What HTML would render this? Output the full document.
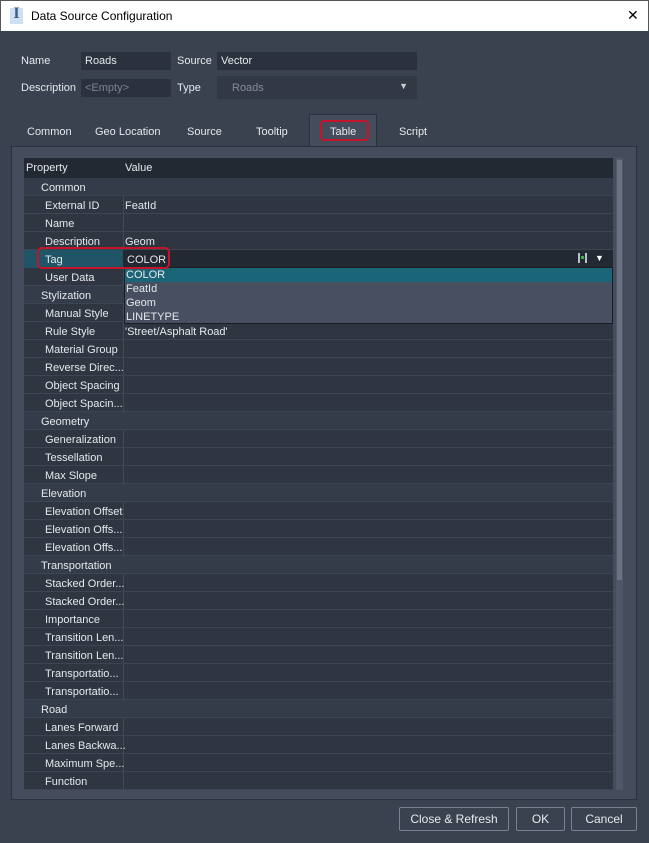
<!DOCTYPE html>
<html><head><meta charset="utf-8"><style>
*{margin:0;padding:0;box-sizing:border-box}
body{width:649px;height:843px;background:#3a4250;font-family:"Liberation Sans",sans-serif;font-size:11px;color:#e6e8ec;position:relative;overflow:hidden}
.a{position:absolute}
#title{left:0;top:0;width:649px;height:31px;background:#fff;border:1px solid #555;border-bottom:none;color:#000;font-size:12px}
.lbl{color:#e6e8ec;font-size:11px}
.fld{background:#2c323d;height:18px;padding:3px 4px;font-size:11px}
.tab{top:126px;font-size:11px;color:#e6e8ec}
#pane{left:11px;top:146px;width:626px;height:654px;background:#454d5d;border:1px solid #2c323d}
#tbl{left:24px;top:158px;width:589px;height:632px;background:#2f3642}
.row{position:absolute;left:0;width:589px;height:18px;border-bottom:1px solid #3e4552;line-height:20px}
.row .p{position:absolute;left:21px}
.row.c{background:#343c49}
.row.c .p{left:17px}
.row .v{position:absolute;left:101px}
.btn{top:807px;height:24px;border:1px solid #7a8190;border-radius:2px;background:#3a4250;text-align:center;line-height:22px;font-size:12px}
</style></head><body>
<div id="title" class="a">
 <div class="a" style="left:9px;top:7px;width:13px;height:16px;background:#cfe0f0"></div>
 <div class="a" style="left:9px;top:4px;font-family:'Liberation Serif',serif;font-weight:bold;font-size:16px;color:#3a5f85;width:13px;text-align:center">I</div>
 <div class="a" style="left:30px;top:8px">Data Source Configuration</div>
 <div class="a" style="left:626px;top:6px;font-size:14px;font-weight:100">✕</div>
</div>
<div class="a lbl" style="left:21px;top:55px">Name</div>
<div class="a fld" style="left:81px;top:52px;width:90px">Roads</div>
<div class="a lbl" style="left:177px;top:55px">Source</div>
<div class="a fld" style="left:217px;top:52px;width:200px">Vector</div>
<div class="a lbl" style="left:21px;top:82px">Description</div>
<div class="a fld" style="left:81px;top:79px;width:90px;color:#7c8390">&lt;Empty&gt;</div>
<div class="a lbl" style="left:177px;top:82px">Type</div>
<div class="a fld" style="left:217px;top:76px;width:200px;height:23px;padding:6px 15px;color:#858c98;background:#323945">Roads<span class="a" style="right:9px;top:5px;font-size:9px;color:#c8ccd2">▼</span></div>

<div class="a" style="left:309px;top:114px;width:68px;height:34px;background:#454d5d;border:1px solid #2c323d;border-bottom:none"></div>
<div class="a tab" style="left:27px">Common</div>
<div class="a tab" style="left:95px">Geo Location</div>
<div class="a tab" style="left:187px">Source</div>
<div class="a tab" style="left:256px">Tooltip</div>
<div class="a" style="left:320px;top:120px;width:49px;height:21px;border:2px solid #c4142a;border-radius:4px"></div>
<div class="a tab" style="left:330px;top:126px">Table</div>
<div class="a tab" style="left:399px">Script</div>

<div id="pane" class="a"></div>
<div class="a" style="left:616px;top:158px;width:7px;height:632px;background:#505867"></div>
<div class="a" style="left:617px;top:160px;width:5px;height:420px;background:#6b7383"></div>
<div id="tbl" class="a">
 <div class="row" style="top:0;height:20px;background:#232932;border-bottom:none;line-height:21px"><span class="a" style="left:2px">Property</span><span class="v">Value</span></div>
 <div class="a" style="left:99px;top:20px;width:1px;height:612px;background:#424957"></div>
</div>
<div id="rows" class="a" style="left:24px;top:178px"></div>
<script>
var r=[["Common",1],["External ID",0,"FeatId"],["Name"],["Description",0,"Geom"],["Tag",2,"COLOR"],["User Data"],["Stylization",1],["Manual Style"],["Rule Style",0,"'Street/Asphalt Road'"],["Material Group"],["Reverse Direc..."],["Object Spacing"],["Object Spacin..."],["Geometry",1],["Generalization"],["Tessellation"],["Max Slope"],["Elevation",1],["Elevation Offset"],["Elevation Offs..."],["Elevation Offs..."],["Transportation",1],["Stacked Order..."],["Stacked Order..."],["Importance"],["Transition Len..."],["Transition Len..."],["Transportatio..."],["Transportatio..."],["Road",1],["Lanes Forward"],["Lanes Backwa..."],["Maximum Spe..."],["Function"]];
var h="";r.forEach(function(x,i){var c=x[1]==1?" c":"";var st="top:"+(i*18)+"px;";
if(x[1]==2){h+='<div class="row" style="'+st+'background:#232932"><div class="a" style="left:0;top:0;width:99px;height:18px;background:#1f5566"></div><span class="p">Tag</span><span class="v" style="left:103px">COLOR</span></div>';}
else h+='<div class="row'+c+'" style="'+st+'"><span class="p">'+x[0]+'</span>'+(x[2]?'<span class="v">'+x[2]+'</span>':'')+'</div>';});
document.getElementById("rows").innerHTML=h;
</script>
<div class="a" style="left:578px;top:253px;width:9px;height:10px;border-left:2px solid #b8c0cc;border-right:2px solid #b8c0cc"><div class="a" style="left:1px;top:3px;width:3px;height:3px;background:#3ab04a"></div></div>
<div class="a" style="left:595px;top:253px;font-size:9px;color:#fff">▼</div>
<div class="a" style="left:124px;top:267px;width:489px;height:57px;background:#474f60;border:1px solid #1a1e24;line-height:14px">
 <div style="background:#1a6678;padding-left:1px">COLOR</div>
 <div style="padding-left:1px">FeatId</div>
 <div style="padding-left:1px">Geom</div>
 <div style="padding-left:1px">LINETYPE</div>
</div>
<div class="a" style="left:37px;top:247px;width:133px;height:22px;border:2px solid #c4142a;border-radius:5px"></div>

<div class="a btn" style="left:399px;width:110px">Close &amp; Refresh</div>
<div class="a btn" style="left:516px;width:49px">OK</div>
<div class="a btn" style="left:571px;width:66px">Cancel</div>
</body></html>
